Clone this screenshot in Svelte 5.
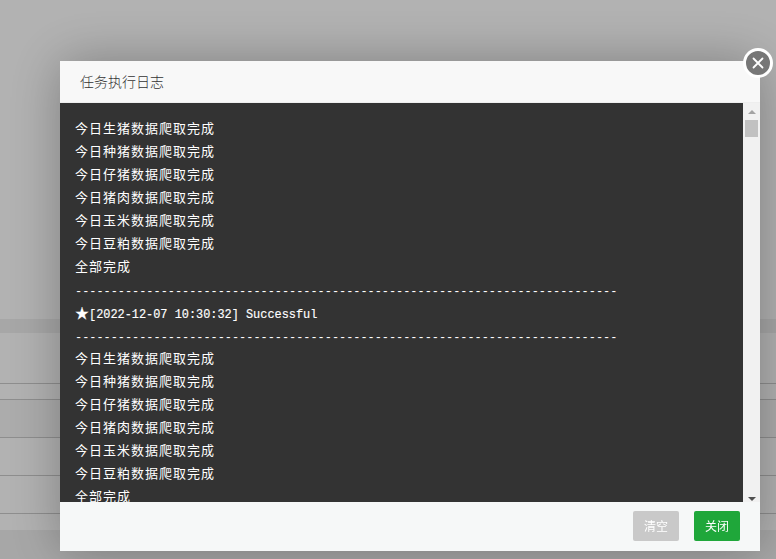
<script>
    const harvest = ['今日生猪数据爬取完成', '今日种猪数据爬取完成', '今日仔猪数据爬取完成', '今日猪肉数据爬取完成', '今日玉米数据爬取完成', '今日豆粕数据爬取完成', '全部完成'];
    const rule = '-'.repeat(76);
</script>

<div class="page">
    <div class="page-top"></div>
    <div class="page-band"></div>
    <div class="page-rows">
        <div class="row r1"></div>
        <div class="row r2"></div>
        <div class="row r3 striped"></div>
        <div class="row r3"></div>
        <div class="row r3"></div>
        <div class="row r4"></div>
    </div>
</div>

<div class="shade">
    <div class="modal">
        <button class="close" aria-label="关闭">
            <svg viewBox="0 0 12 12" width="12" height="12"><path d="M1.5 1.5 10.5 10.5M10.5 1.5 1.5 10.5" stroke="#fff" stroke-width="1.8" stroke-linecap="round" fill="none" /></svg>
        </button>
        <div class="title">任务执行日志</div>
        <div class="body">
            <div class="log">
                {#each harvest as line}
                    <p class="cjk">{line}</p>
                {/each}
                <p class="mono rule">{rule}</p>
                <p class="mono status"><span class="star">★</span>[2022-12-07 10:30:32] Successful</p>
                <p class="mono rule">{rule}</p>
                {#each harvest as line}
                    <p class="cjk">{line}</p>
                {/each}
            </div>
            <div class="scrollbar">
                <span class="arrow up"></span>
                <span class="thumb"></span>
                <span class="arrow down"></span>
            </div>
        </div>
        <div class="foot">
            <button class="btn grey">清空</button>
            <button class="btn green">关闭</button>
        </div>
    </div>
</div>

<style>
    :global(body) {
        margin: 0;
        overflow: hidden;
    }

    .page {
        height: 559px;
        background: #f0f0f0;
        display: flex;
        flex-direction: column;
    }

    .page-top {
        height: 319px;
        background: #fff;
    }

    .page-band {
        height: 14px;
        background: #f0f0f0;
    }

    .page-rows {
        background: #fff;
    }

    .row {
        border-bottom: 1px solid #ccc;
        box-sizing: border-box;
    }

    .r1 { height: 51px; }
    .r2 { height: 16px; }
    .r3 { height: 38px; }
    .r4 { height: 16px; border-bottom: 0; }
    .striped { background: #f7f7f7; }

    .shade {
        position: fixed;
        inset: 0;
        background: rgba(0, 0, 0, 0.3);
        font-family: "Noto Sans CJK SC", "Liberation Sans", sans-serif;
    }

    .modal {
        position: absolute;
        left: 60px;
        top: 61px;
        width: 700px;
        height: 490px;
        display: flex;
        flex-direction: column;
        background: #f6f8f8;
        box-shadow: 1px 1px 50px rgba(0, 0, 0, 0.3);
    }

    .close {
        position: absolute;
        right: -13px;
        top: -13px;
        width: 30px;
        height: 30px;
        padding: 0;
        box-sizing: border-box;
        border: 3px solid #fff;
        border-radius: 50%;
        background: #777;
        display: flex;
        align-items: center;
        justify-content: center;
    }

    .title {
        height: 42px;
        flex: none;
        box-sizing: border-box;
        padding-left: 20px;
        line-height: 40px;
        font-size: 14px;
        font-weight: 300;
        color: #333;
        background: #f8f8f8;
        border-bottom: 1px solid #eee;
    }

    .body {
        flex: 1;
        min-height: 0;
        display: flex;
    }

    .log {
        flex: 1;
        min-width: 0;
        overflow: hidden;
        padding: 15px 15px 0;
        background: #333;
        color: #fff;
    }

    .log p {
        margin: 0;
        height: 23px;
        line-height: 23px;
        white-space: pre;
    }

    .log .cjk {
        font-size: 13px;
        letter-spacing: 1px;
        line-height: 19px;
    }

    .mono {
        font-family: "Liberation Mono", monospace;
        font-size: 11.9px;
        -webkit-text-stroke: 0.15px #fff;
    }

    .log .rule {
        line-height: 27px;
        -webkit-text-stroke: 0;
    }

    .log .status {
        line-height: 26px;
    }

    .star {
        font-family: "Noto Sans CJK SC", sans-serif;
        font-size: 14px;
        line-height: 1;
        display: inline-block;
        width: 14px;
    }

    .scrollbar {
        width: 17px;
        flex: none;
        background: #f1f1f1;
        display: flex;
        flex-direction: column;
        align-items: center;
    }

    .thumb {
        width: 13px;
        height: 17px;
        margin-top: 6px;
        background: #c1c1c1;
    }

    .arrow {
        width: 0;
        height: 0;
        border-left: 4px solid transparent;
        border-right: 4px solid transparent;
    }

    .arrow.up {
        margin-top: 7px;
        border-bottom: 4px solid #a3a3a3;
    }

    .arrow.down {
        margin-top: auto;
        margin-bottom: 1px;
        border-top: 4px solid #505050;
    }

    .foot {
        height: 49px;
        flex: none;
        box-sizing: border-box;
        padding: 9px 20px 0 0;
        display: flex;
        justify-content: flex-end;
        gap: 15px;
    }

    .btn {
        width: 46px;
        height: 30px;
        padding: 0 0 2px;
        border: 0;
        border-radius: 2px;
        color: #fff;
        font-family: inherit;
        font-size: 12px;
    }

    .grey { background: #c9c9c9; }
    .green { background: #1fa73a; }
</style>
